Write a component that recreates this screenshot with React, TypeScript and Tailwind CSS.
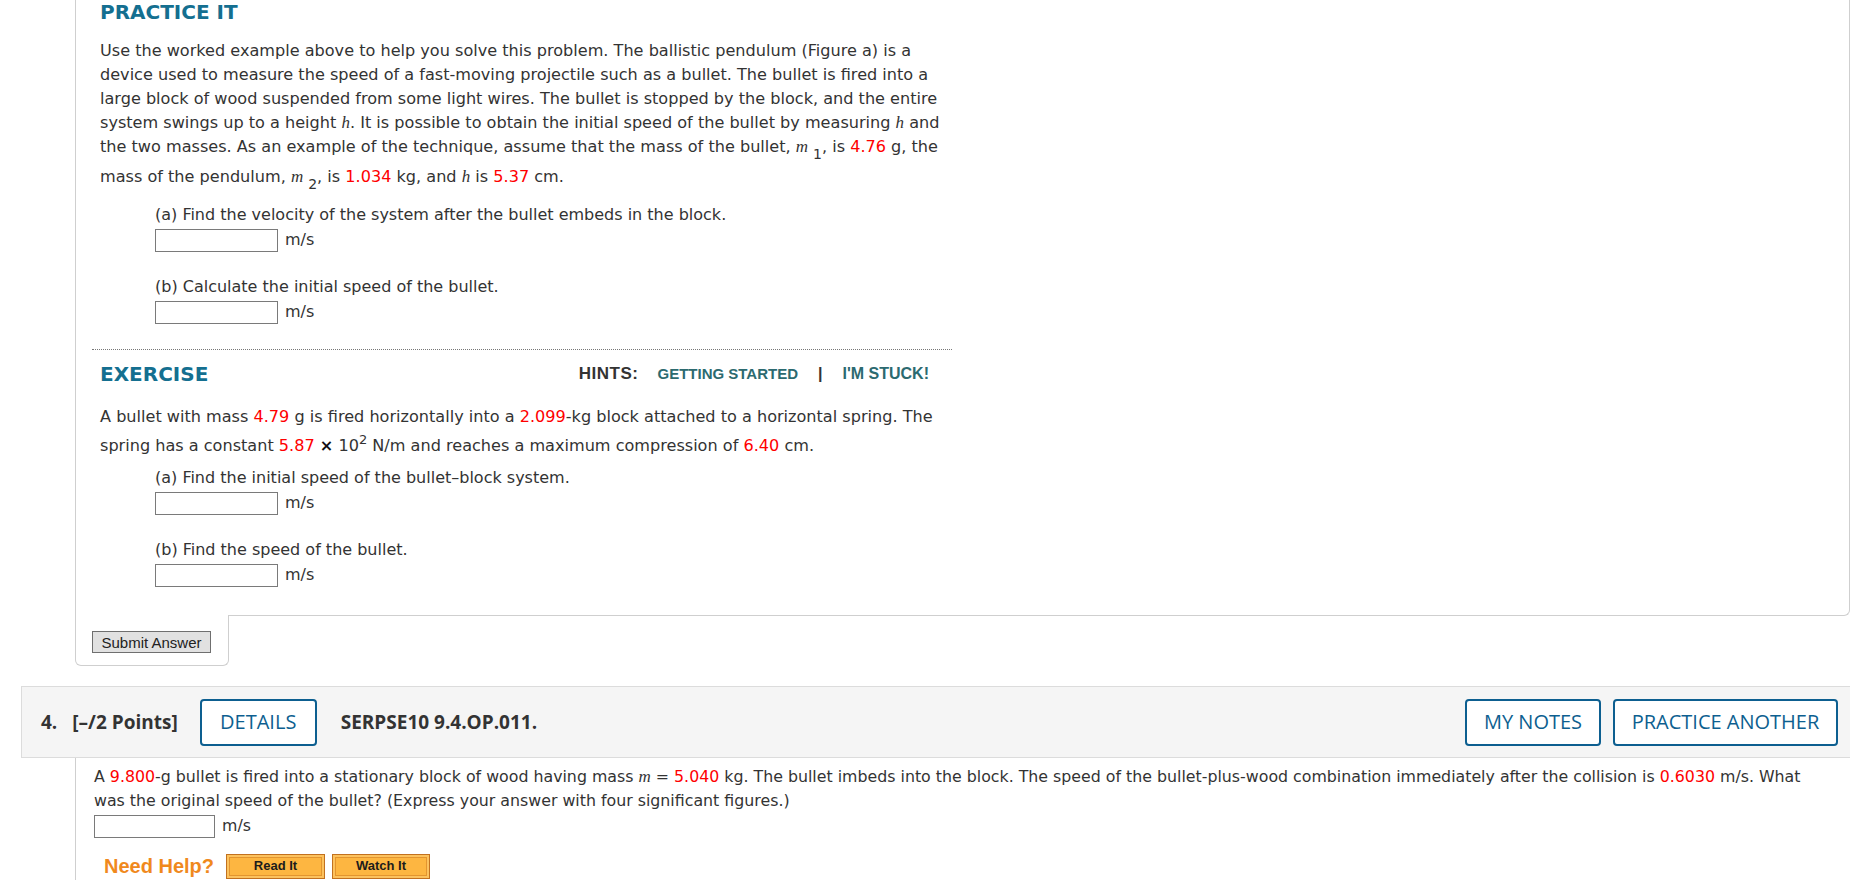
import React from "react";

function Red({ children }: { children: React.ReactNode }) {
  return <span className="text-[#ff0000]">{children}</span>;
}

function MathVar({ children }: { children: React.ReactNode }) {
  return <i className="font-['Liberation_Serif',serif] text-[17px]">{children}</i>;
}

function Sub({ children }: { children: React.ReactNode }) {
  return <span className="ml-[5px] align-[-7px] text-[14px] leading-[22px]">{children}</span>;
}

function AnswerBox({ width = "w-[123px]" }: { width?: string }) {
  return (
    <div className="flex items-center">
      <input
        type="text"
        className={`${width} h-[23px] border border-[#7a7a7a] bg-white outline-none`}
      />
      <span className="ml-[7px] leading-[24px]">m/s</span>
    </div>
  );
}

function SubQuestion({ label, className }: { label: string; className?: string }) {
  return (
    <div className={`ml-[63px] text-[16px] ${className ?? ""}`}>
      <div className="leading-[24px]">{label}</div>
      <div className="mt-px">
        <AnswerBox />
      </div>
    </div>
  );
}

function OutlineButton({ label, width }: { label: string; width: string }) {
  return (
    <button
      className={`${width} h-[47px] flex items-center justify-center rounded-[4px] border-2 border-[#0d5f90] bg-white text-[20px] font-normal text-[#0d5f90] font-['Open_Sans',sans-serif]`}
    >
      {label}
    </button>
  );
}

function HelpButton({ label, width }: { label: string; width: string }) {
  return (
    <button
      className={`${width} h-[25px] border border-[#c2711f] bg-[#fdb641] shadow-[inset_0_0_0_2px_#fcc25e,inset_0_0_0_3px_#e3952f] text-[13px] font-bold text-[#1c1c1c] font-['Liberation_Sans',Arial,sans-serif]`}
    >
      {label}
    </button>
  );
}

export default function App() {
  return (
    <div className="w-[1850px] h-[880px] overflow-hidden bg-white text-[15px] text-[#333] font-['DejaVu_Sans',Verdana,sans-serif]">
      {/* practice / exercise panel */}
      <div className="ml-[75px] border-l border-r border-b border-[#cfcfcf] rounded-br-md pb-[28px]">
        <div className="ml-[16px] w-[860px]">
          <div className="pl-[8px]">
            <h2 className="text-[20px] leading-[24px] font-bold text-[#146f90]">PRACTICE IT</h2>
            <p className="mt-[15px] text-[16.1px] leading-[24px]">
              Use the worked example above to help you solve this problem. The ballistic pendulum (Figure a) is a
              device used to measure the speed of a fast-moving projectile such as a bullet. The bullet is fired into a
              large block of wood suspended from some light wires. The bullet is stopped by the block, and the entire
              system swings up to a height <MathVar>h</MathVar>. It is possible to obtain the initial speed of the
              bullet by measuring <MathVar>h</MathVar> and the two masses. As an example of the technique, assume that
              the mass of the bullet, <MathVar>m</MathVar>
              <Sub>1</Sub>, is <Red>4.76</Red> g, the mass of the pendulum, <MathVar>m</MathVar>
              <Sub>2</Sub>, is <Red>1.034</Red> kg, and <MathVar>h</MathVar> is <Red>5.37</Red> cm.
            </p>
          </div>

          <SubQuestion className="mt-[8px]" label="(a) Find the velocity of the system after the bullet embeds in the block." />
          <SubQuestion className="mt-[23px]" label="(b) Calculate the initial speed of the bullet." />

          <div className="mt-[25px] border-t border-dotted border-[#777]" />

          <div className="mt-[12px] pl-[8px] pr-[23px] flex items-center justify-between leading-[24px]">
            <h2 className="text-[20px] font-bold text-[#146f90]">EXERCISE</h2>
            <div className="flex items-center font-['Liberation_Sans',Arial,sans-serif] font-bold">
              <span className="text-[17px] tracking-[0.5px] text-[#333]">HINTS:</span>
              <span className="ml-[19px] text-[15px] text-[#2c6a70]">GETTING STARTED</span>
              <span className="ml-[20px] text-[16px] text-[#333]">|</span>
              <span className="ml-[20px] text-[16px] text-[#2c6a70]">I'M STUCK!</span>
            </div>
          </div>

          <p className="mt-[19px] pl-[8px] text-[16.1px] leading-[24px]">
            A bullet with mass <Red>4.79</Red> g is fired horizontally into a <Red>2.099</Red>-kg block attached to a
            horizontal spring. The spring has a constant <Red>5.87</Red> <b className="text-[#111]">×</b> 10
            <span className="align-[7px] text-[13px] leading-[22px]">2</span> N/m and reaches a maximum compression
            of <Red>6.40</Red> cm.
          </p>

          <SubQuestion className="mt-[8px]" label="(a) Find the initial speed of the bullet–block system." />
          <SubQuestion className="mt-[23px]" label="(b) Find the speed of the bullet." />
        </div>
      </div>

      {/* submit tab */}
      <div className="relative z-10 ml-[75px] -mt-px w-[154px] h-[51px] bg-white border-l border-r border-b border-[#cfcfcf] rounded-b-md pl-[16px] pt-[16px]">
        <button className="w-[119px] h-[22px] border border-[#6f6f6f] bg-[#e1e1e1] text-[15px] leading-none text-[#222] font-['Liberation_Sans',Arial,sans-serif]">
          Submit Answer
        </button>
      </div>

      {/* question 4 header */}
      <div className="mt-[20px] ml-[21px] h-[72px] flex items-center border border-r-0 border-[#dcdcdc] bg-[#f5f5f5] pl-[19px] pr-[12px] font-['Open_Sans',sans-serif] text-[19px] text-[#333]">
        <span className="font-bold">4.</span>
        <span className="ml-[15px] font-bold">[–/2 Points]</span>
        <div className="ml-[22px]">
          <OutlineButton label="DETAILS" width="w-[117px]" />
        </div>
        <span className="ml-[24px] font-bold">SERPSE10 9.4.OP.011.</span>
        <div className="ml-auto flex items-center gap-[12px]">
          <OutlineButton label="MY NOTES" width="w-[136px]" />
          <OutlineButton label="PRACTICE ANOTHER" width="w-[225px]" />
        </div>
      </div>

      {/* question 4 body */}
      <div className="ml-[75px] border-l border-[#cfcfcf] pl-[18px] pr-[25px] pt-[7px] h-[200px] text-[15.8px]">
        <p className="leading-[24px]">
          A <Red>9.800</Red>-g bullet is fired into a stationary block of wood having mass <MathVar>m</MathVar> ={" "}
          <Red>5.040</Red> kg. The bullet imbeds into the block. The speed of the bullet-plus-wood combination
          immediately after the collision is <Red>0.6030</Red> m/s. What was the original speed of the bullet? (Express
          your answer with four significant figures.)
        </p>
        <div className="mt-px">
          <AnswerBox width="w-[121px]" />
        </div>
        <div className="mt-[13px] flex items-center pl-[10px] font-['Liberation_Sans',Arial,sans-serif]">
          <span className="text-[20px] font-bold text-[#f0891d]">Need Help?</span>
          <div className="ml-[12px] flex gap-[7px]">
            <HelpButton label="Read It" width="w-[99px]" />
            <HelpButton label="Watch It" width="w-[98px]" />
          </div>
        </div>
      </div>
    </div>
  );
}
